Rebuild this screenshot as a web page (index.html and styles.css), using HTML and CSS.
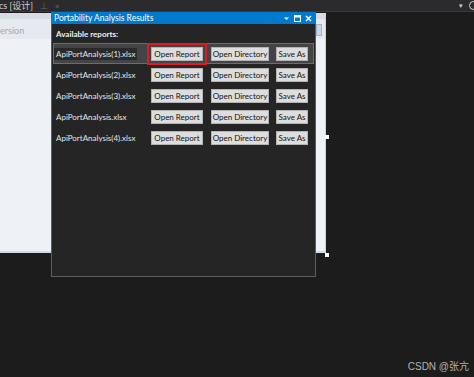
FILE: index.html
```html
<!DOCTYPE html>
<html lang="en">
<head>
    <meta charset="UTF-8">
    <title>Portability Analysis Results</title>
    <link rel="stylesheet" href="styles.css">
</head>
<body>
<div class="tabbar">
    <span class="tab-name">cs [设计]</span>
    <span class="tab-icon">&#8869;</span>
    <span class="tab-icon">&#215;</span>
    <span class="tab-spacer"></span>
    <span class="tab-drop">&#9662;</span>
    <span class="tab-gear"></span>
</div>
<div class="workspace">
    <div class="designer">
        <div class="designer-head">ersion</div>
        <div class="designer-knob"></div>
    </div>
    <div class="handle handle-mid"></div>
    <div class="handle handle-bottom"></div>

    <div class="tool-window">
        <div class="title-bar">
            <span class="title-text">Portability Analysis Results</span>
            <span class="title-btn">
                <svg width="7" height="7" viewBox="0 0 7 7"><path d="M1 2.5h5L3.5 5z" fill="#fff"/></svg>
            </span>
            <span class="title-btn">
                <svg width="7" height="7" viewBox="0 0 7 7"><rect x="0.5" y="0.5" width="6" height="6" fill="none" stroke="#fff"/><rect x="0.5" y="0.5" width="6" height="2" fill="#fff"/></svg>
            </span>
            <span class="title-btn">
                <svg width="7" height="7" viewBox="0 0 7 7"><path d="M1 1l5 5M6 1l-5 5" stroke="#fff" stroke-width="1.4"/></svg>
            </span>
        </div>
        <div class="window-body">
            <div class="heading">Available reports:</div>
            <div class="report-list">
                <div class="report selected">
                    <span class="file-name"><span class="file-text">ApiPortAnalysis(1).xlsx</span></span>
                    <button class="btn btn-open marked">Open Report</button>
                    <button class="btn btn-dir">Open Directory</button>
                    <button class="btn btn-save">Save As</button>
                </div>
                <div class="report">
                    <span class="file-name"><span class="file-text">ApiPortAnalysis(2).xlsx</span></span>
                    <button class="btn btn-open">Open Report</button>
                    <button class="btn btn-dir">Open Directory</button>
                    <button class="btn btn-save">Save As</button>
                </div>
                <div class="report">
                    <span class="file-name"><span class="file-text">ApiPortAnalysis(3).xlsx</span></span>
                    <button class="btn btn-open">Open Report</button>
                    <button class="btn btn-dir">Open Directory</button>
                    <button class="btn btn-save">Save As</button>
                </div>
                <div class="report">
                    <span class="file-name"><span class="file-text">ApiPortAnalysis.xlsx</span></span>
                    <button class="btn btn-open">Open Report</button>
                    <button class="btn btn-dir">Open Directory</button>
                    <button class="btn btn-save">Save As</button>
                </div>
                <div class="report">
                    <span class="file-name"><span class="file-text">ApiPortAnalysis(4).xlsx</span></span>
                    <button class="btn btn-open">Open Report</button>
                    <button class="btn btn-dir">Open Directory</button>
                    <button class="btn btn-save">Save As</button>
                </div>
            </div>
        </div>
    </div>
</div>
<div class="watermark">CSDN @张亢</div>
</body>
</html>
```

FILE: styles.css
```css
html{
    height: 100%;
}
body{
    width: 474px;
    height: 377px;
    margin: 0;
    padding: 0;
    overflow: hidden;
    background-color: #1c1c1c;
    font-family: Lato, "Noto Sans CJK SC", sans-serif;
    position: relative;
}
.tabbar{
    display: flex;
    align-items: center;
    height: 11px;
    background-color: #2b2b2d;
    border-bottom: 1px solid #3a3a3c;
    font-size: 9px;
    color: #d0d0d0;
}
.tab-name{
    margin-left: -1px;
    line-height: 11px;
}
.tab-icon{
    margin-left: 7px;
    color: #6a6a6a;
    font-size: 8px;
}
.tab-spacer{
    flex: 1;
}
.tab-drop{
    color: #cfcfcf;
    font-size: 7px;
    margin-right: 6px;
}
.tab-gear{
    width: 7px;
    height: 7px;
    border: 1px solid #cfcfcf;
    border-radius: 50%;
    margin-right: -4px;
}
.workspace{
    position: relative;
    padding-top: 1px;
}
.designer{
    width: 326px;
    height: 240px;
    background-color: #eef1f5;
    border-right: 1px solid #c9d3e0;
    border-bottom: 2px solid #cfdcf0;
    box-sizing: border-box;
}
.designer-head{
    height: 26px;
    padding-top: 6px;
    box-sizing: border-box;
    font-size: 9px;
    color: #a4a8b2;
    background-color: #e6e9ef;
    border-top: 6px solid #d7dbe2;
}
.designer-knob{
    width: 4px;
    height: 10px;
    margin: -15px 0 0 316px;
    background-color: #c9d6ea;
    border: 1px solid #9fb4d2;
}
.handle{
    position: absolute;
    left: 325px;
    width: 4px;
    height: 4px;
    background-color: #fff;
}
.handle-mid{
    top: 123px;
}
.handle-bottom{
    top: 241px;
}
.tool-window{
    position: absolute;
    left: 51px;
    top: 0;
    width: 265px;
    height: 265px;
    box-sizing: border-box;
    border: 1px solid #5e5e5e;
    border-top: none;
    background-color: #252526;
    display: flex;
    flex-direction: column;
}
.title-bar{
    display: flex;
    align-items: center;
    height: 12px;
    margin: 0 -1px;
    padding: 0 4px 0 3px;
    background-color: #007acc;
    color: #fff;
    font-size: 8.5px;
}
.title-text{
    flex: 1;
    white-space: nowrap;
}
.title-btn{
    display: flex;
    margin-left: 4px;
}
.window-body{
    flex: 1;
    padding: 3px 1px 0 1px;
}
.heading{
    font-size: 8px;
    font-weight: bold;
    color: #f0f0f0;
    padding-left: 3px;
    height: 14px;
    line-height: 14px;
}
.report-list{
    display: flex;
    flex-direction: column;
    margin-top: 2px;
}
.report{
    display: flex;
    align-items: center;
    height: 21px;
    box-sizing: border-box;
    padding-left: 2px;
    border: 1px solid transparent;
}
.report.selected{
    background-color: #444446;
    border-color: #6c6c6c;
}
.file-name{
    width: 95px;
    font-size: 8px;
    color: #e6e6e6;
    white-space: nowrap;
}
.selected .file-text{
    background-color: #2a2a2a;
    padding: 1px 2px;
    margin-left: -2px;
}
.btn{
    height: 14px;
    margin: 0;
    padding: 0;
    font-family: Lato, sans-serif;
    font-size: 8px;
    line-height: 12px;
    color: #111;
    text-align: center;
    white-space: nowrap;
    background-color: #dddddd;
    border: 1px solid #b4b4b4;
    border-radius: 0;
}
.btn-open{
    width: 52px;
}
.btn-dir{
    width: 58px;
    margin-left: 8px;
}
.btn-save{
    width: 32px;
    margin-left: 7px;
}
.marked{
    outline: 2px solid #e01a22;
    outline-offset: 2px;
}
.watermark{
    position: absolute;
    right: 5px;
    bottom: 4px;
    font-family: "Liberation Sans", "Noto Sans CJK SC", sans-serif;
    font-size: 10px;
    color: #b4b4b4;
}
```
